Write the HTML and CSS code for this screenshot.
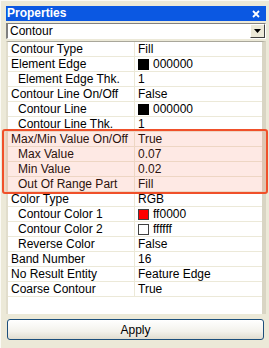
FILE: index.html
```html
<!DOCTYPE html>
<html>
<head>
<meta charset="utf-8">
<link rel="stylesheet" href="styles.css">
</head>
<body>
<div class="panel">
  <div class="titlebar">
    <span class="title">Properties</span>
    <svg class="close" width="8" height="8" viewBox="0 0 8 8"><path d="M1 1L7 7M7 1L1 7" stroke="#fff" stroke-width="1.8"/></svg>
  </div>
  <div class="combo">
    <span class="combo-text">Contour</span>
    <span class="combo-btn"><svg width="7" height="4" viewBox="0 0 7 4"><path d="M0 0H7L3.5 4Z" fill="#000"/></svg></span>
  </div>
  <div class="grid">
    <div class="row"><div class="name">Contour Type</div><div class="val">Fill</div></div>
    <div class="row"><div class="name">Element Edge</div><div class="val"><span class="sw sw-black"></span>000000</div></div>
    <div class="row"><div class="name sub">Element Edge Thk.</div><div class="val">1</div></div>
    <div class="row"><div class="name">Contour Line On/Off</div><div class="val">False</div></div>
    <div class="row"><div class="name sub">Contour Line</div><div class="val"><span class="sw sw-black"></span>000000</div></div>
    <div class="row"><div class="name sub">Contour Line Thk.</div><div class="val">1</div></div>
    <div class="row"><div class="name">Max/Min Value On/Off</div><div class="val">True</div></div>
    <div class="row"><div class="name sub">Max Value</div><div class="val">0.07</div></div>
    <div class="row"><div class="name sub">Min Value</div><div class="val">0.02</div></div>
    <div class="row"><div class="name sub">Out Of Range Part</div><div class="val">Fill</div></div>
    <div class="row"><div class="name">Color Type</div><div class="val">RGB</div></div>
    <div class="row"><div class="name sub">Contour Color 1</div><div class="val"><span class="sw sw-red"></span>ff0000</div></div>
    <div class="row"><div class="name sub">Contour Color 2</div><div class="val"><span class="sw sw-white"></span>ffffff</div></div>
    <div class="row"><div class="name sub">Reverse Color</div><div class="val">False</div></div>
    <div class="row"><div class="name">Band Number</div><div class="val">16</div></div>
    <div class="row"><div class="name">No Result Entity</div><div class="val">Feature Edge</div></div>
    <div class="row"><div class="name">Coarse Contour</div><div class="val">True</div></div>
  </div>
  <div class="footer">
    <button class="apply">Apply</button>
  </div>
  <div class="highlight"></div>
</div>
</body>
</html>
```

FILE: styles.css
```css
* { box-sizing: border-box; }
html, body { margin: 0; padding: 0; }
body {
  background: #ece9d8;
  font-family: "Liberation Sans", Arial, sans-serif;
  font-size: 12px;
  color: #000;
}
.panel {
  position: relative;
  width: 269px;
  height: 348px;
  padding: 5px 3px 0 5px;
  background: #ece9d8;
  border-left: 1px solid #fbfaf5;
  border-top: 1px solid #fbfaf5;
}
.titlebar {
  height: 15px;
  background: #0b58e2;
  display: flex;
  align-items: center;
  justify-content: space-between;
  padding: 0 6px 0 1px;
}
.title {
  color: #fff;
  font-weight: bold;
  font-size: 12px;
  line-height: 15px;
}
.close { display: block; }
.combo {
  margin-top: 2px;
  height: 16px;
  background: #fff;
  border-top: 1px solid #808080;
  border-left: 2px solid #808080;
  border-right: 1px solid #fff;
  border-bottom: 1px solid #fff;
  display: flex;
  align-items: center;
  justify-content: space-between;
}
.combo-text { padding-left: 2px; line-height: 14px; }
.combo-btn {
  width: 15px;
  height: 14px;
  background: #ece9d8;
  border-top: 1px solid #fff;
  border-left: 1px solid #fff;
  border-right: 1px solid #404040;
  border-bottom: 1px solid #404040;
  display: flex;
  align-items: center;
  justify-content: center;
}
.grid {
  margin-top: 2px;
  height: 273px;
  background: #fff;
  border-top: 1px solid #a9a79a;
  border-left: 2px solid #e1ddcc;
  border-right: 4px solid #d9d5c4;
}
.row {
  height: 15px;
  display: grid;
  grid-template-columns: 127px 1fr;
  border-bottom: 1px solid #ece9d8;
  line-height: 14px;
}
.name {
  padding-left: 3px;
  border-right: 1px solid #ece9d8;
  white-space: nowrap;
  overflow: hidden;
}
.name.sub { padding-left: 10px; }
.val {
  padding-left: 3px;
  display: flex;
  align-items: center;
  white-space: nowrap;
}
.sw {
  width: 11px;
  height: 11px;
  margin-right: 4px;
  display: inline-block;
}
.sw-black { background: #000; }
.sw-red { background: #ff0000; border: 1px solid #404040; }
.sw-white { background: #fff; border: 1px solid #404040; }
.footer {
  padding: 5px 0 0 1px;
}
.apply {
  width: 257px;
  height: 21px;
  font-family: "Liberation Sans", Arial, sans-serif;
  font-size: 12px;
  color: #000;
  border: 1px solid #1c4f7c;
  border-radius: 3px;
  background: linear-gradient(#ffffff, #f3f2ec 60%, #e0ddd0);
  padding: 0;
}
.highlight {
  position: absolute;
  left: 1px;
  top: 128px;
  width: 266px;
  height: 65px;
  border: 2px solid #f0502a;
  border-radius: 3px;
  background: rgba(250, 120, 90, 0.16);
}
```
